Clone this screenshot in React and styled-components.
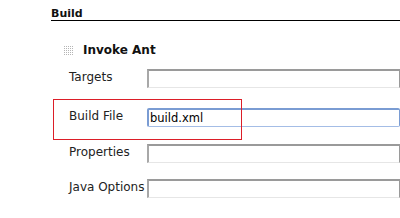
import React from "react";
import styled, { createGlobalStyle } from "styled-components";

const GlobalStyle = createGlobalStyle`
  html, body {
    margin: 0;
    padding: 0;
    background: #fff;
  }
  body {
    font-family: "DejaVu Sans", Verdana, sans-serif;
    font-size: 11px;
    color: #222;
    overflow: hidden;
  }
`;

const fields = [
  { label: "Targets", value: "", top: 0 },
  { label: "Build File", value: "build.xml", top: 20, focused: true },
  { label: "Properties", value: "", top: 17 },
  { label: "Java Options", value: "", top: 16 },
];

const Grip = () => (
  <svg width="12" height="11" viewBox="0 0 12 11">
    {[0, 1, 2, 3, 4].map((r) =>
      [0, 1, 2, 3, 4].map((c) => (
        <rect
          key={`${r}-${c}`}
          x={c * 2 + 1}
          y={r * 2 + 1}
          width="1"
          height="1"
          fill="#b5b5b5"
        />
      ))
    )}
  </svg>
);

const App = () => {
  return (
    <Page>
      <GlobalStyle />
      <SectionHeader>Build</SectionHeader>
      <StepHeader>
        <Grip />
        <StepTitle>Invoke Ant</StepTitle>
      </StepHeader>
      <Form>
        {fields.map((f) => (
          <Row key={f.label} $top={f.top}>
            <Label>{f.label}</Label>
            <Input $focused={f.focused} defaultValue={f.value} readOnly />
          </Row>
        ))}
      </Form>
      <Highlight />
    </Page>
  );
};

const Page = styled.div`
  position: relative;
  width: 400px;
  height: 218px;
  overflow: hidden;
  padding-top: 7px;
  box-sizing: border-box;
`;

const SectionHeader = styled.div`
  margin-left: 51px;
  font-weight: bold;
  font-size: 11px;
  line-height: 13px;
  color: #111;
  border-bottom: 1px solid #000;
`;

const StepHeader = styled.div`
  display: flex;
  align-items: center;
  gap: 8px;
  margin: 23px 0 0 63px;
  height: 12px;
`;

const StepTitle = styled.span`
  font-weight: bold;
  font-size: 12px;
  color: #111;
`;

const Form = styled.div`
  display: flex;
  flex-direction: column;
  margin-top: 13px;
  padding-left: 69px;
`;

const Row = styled.div`
  display: flex;
  align-items: flex-start;
  margin-top: ${(p) => p.$top}px;
`;

const Label = styled.div`
  width: 78px;
  flex-shrink: 0;
  padding-top: 1px;
  font-size: 12px;
  line-height: 14px;
  color: #222;
  white-space: nowrap;
`;

const Input = styled.input`
  width: 300px;
  height: 19px;
  box-sizing: border-box;
  margin: 0;
  padding: 0 1px;
  font-family: "DejaVu Sans", Verdana, sans-serif;
  font-size: 11.5px;
  color: #000;
  background: #fff;
  outline: none;
  border-style: solid;
  border-width: 2px 1px 1px 2px;
  border-color: ${(p) =>
    p.$focused ? "#7a9cd3 #7a9cd3 #a4bde6 #7a9cd3" : "#9a9a9a #9a9a9a #e6e6e6 #a8a8a8"};
  border-radius: ${(p) => (p.$focused ? "2px" : "0")};
`;

const Highlight = styled.div`
  position: absolute;
  left: 53px;
  top: 99px;
  width: 187px;
  height: 39px;
  border: 1px solid rgb(220, 30, 40);
  pointer-events: none;
`;

export default App;
